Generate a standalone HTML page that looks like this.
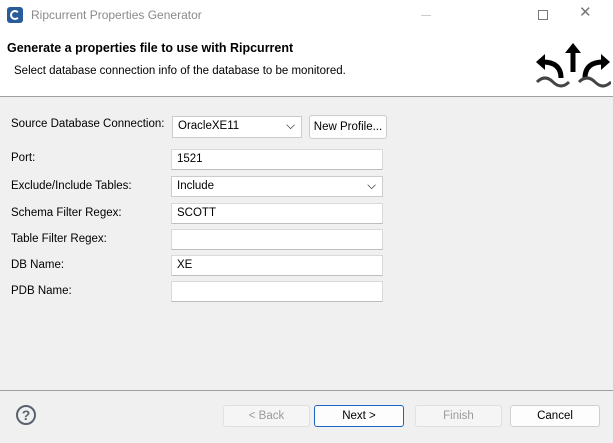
<!DOCTYPE html><html><head><style>
*{box-sizing:border-box}
body{margin:0;width:613px;height:443px;overflow:hidden;font-family:"Liberation Sans",sans-serif;font-size:11.5px;background:#f0f0f0;position:relative;color:#000}
.a{position:absolute}
.inp{position:absolute;left:171px;width:212px;height:21px;background:#fff;border:1px solid #d9d9d9;border-bottom-color:#bdbdbd;padding:3px 0 0 5px;font-size:11.5px}
.lbl{position:absolute;left:11px;font-size:11.5px}
.btn{position:absolute;top:405px;height:22px;border:1px solid #d0d0d0;background:#fdfdfd;border-radius:3px;text-align:center;line-height:20px;font-size:11.5px}
.chev{position:absolute;right:6px;top:3px}
</style></head><body>
<div class="a" style="left:0;top:0;width:613px;height:97px;background:#fff;border-bottom:1px solid #a0a0a0"></div>
<div class="a" style="left:7px;top:7px;width:16px;height:16px;background:#2a5b9a;border-radius:3px"><div class="a" style="left:3px;top:3px;width:10px;height:10px;border:2px solid #fff;border-radius:50%;border-right-color:transparent"></div></div>
<div class="a" style="left:31px;top:8px;color:#8a8a8a;font-size:12px">Ripcurrent Properties Generator</div>
<div class="a" style="left:421px;top:15px;width:10px;border-top:1px solid #ccc"></div>
<div class="a" style="left:538px;top:10px;width:10px;height:10px;border:1px solid #777"></div>
<div class="a" style="left:579px;top:3px;color:#777;font-size:15px">✕</div>
<div class="a" style="left:7px;top:41px;font-weight:bold;font-size:12.5px">Generate a properties file to use with Ripcurrent</div>
<div class="a" style="left:14px;top:65px">Select database connection info of the database to be monitored.</div>
<svg class="a" style="left:535px;top:40px" width="76" height="50" viewBox="0 0 76 50">
<path d="M38 32V12" stroke="#000" stroke-width="5"/><path d="M30 13L38 3L46 13Z" fill="#000"/>
<path d="M26 38C26 26 18 22 8 22" stroke="#000" stroke-width="5" fill="none"/><path d="M10 14L1 22L10 30Z" fill="#000"/>
<path d="M50 38C50 26 58 22 68 22" stroke="#000" stroke-width="5" fill="none"/><path d="M66 14L75 22L66 30Z" fill="#000"/>
<path d="M2 42Q10 34 18 42T34 42" stroke="#444" stroke-width="3" fill="none"/>
<path d="M44 42Q52 34 60 42T76 42" stroke="#444" stroke-width="3" fill="none"/>
</svg>
<div class="lbl" style="top:118px">Source Database Connection:</div>
<div class="inp" style="top:116px;width:130px;left:172px;height:22px;border-color:#ccc">OracleXE11<span class="chev">⌵</span></div>
<div class="a" style="left:309px;top:115px;width:78px;height:24px;background:#fdfdfd;border:1px solid #ccc;border-radius:3px;text-align:center;line-height:22px">New Profile...</div>
<div class="lbl" style="top:152px">Port:</div><div class="inp" style="top:149px">1521</div>
<div class="lbl" style="top:180px">Exclude/Include Tables:</div><div class="inp" style="top:176px;border-color:#ccc">Include<span class="chev">⌵</span></div>
<div class="lbl" style="top:207px">Schema Filter Regex:</div><div class="inp" style="top:203px">SCOTT</div>
<div class="lbl" style="top:233px">Table Filter Regex:</div><div class="inp" style="top:229px"></div>
<div class="lbl" style="top:259px">DB Name:</div><div class="inp" style="top:255px">XE</div>
<div class="lbl" style="top:285px">PDB Name:</div><div class="inp" style="top:281px"></div>
<div class="a" style="left:0;top:390px;width:613px;border-top:1px solid #a0a0a0"></div>
<div class="a" style="left:16px;top:405px;width:20px;height:20px;border:2px solid #5a6270;border-radius:50%;text-align:center;line-height:16px;font-weight:bold;color:#5a6270;font-size:14px">?</div>
<div class="btn" style="left:223px;width:87px;color:#9a9a9a;border-color:#e0e0e0;background:#f5f5f5">&lt; Back</div>
<div class="btn" style="left:314px;width:90px;border:1px solid #1a66c0">Next &gt;</div>
<div class="btn" style="left:415px;width:87px;color:#9a9a9a;border-color:#e0e0e0;background:#f5f5f5">Finish</div>
<div class="btn" style="left:510px;width:90px">Cancel</div>
</body></html>
